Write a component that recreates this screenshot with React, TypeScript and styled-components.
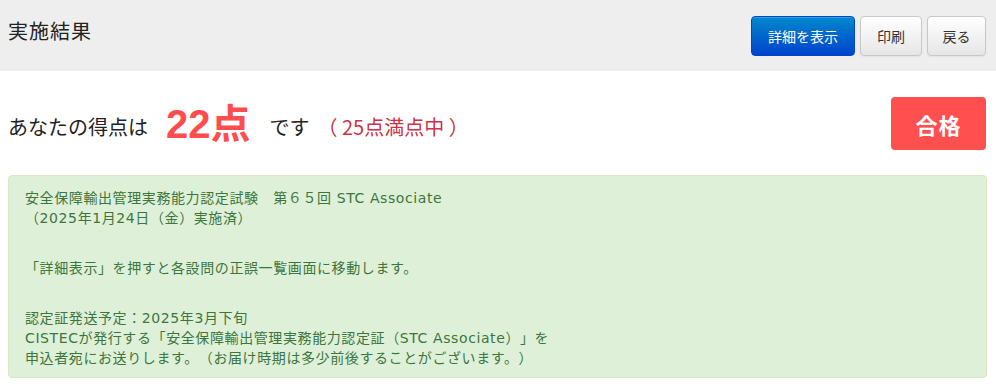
import React from "react";
import styled, { createGlobalStyle } from "styled-components";

const Global = createGlobalStyle`
  html, body { margin: 0; padding: 0; background: #ffffff; }
  body {
    font-family: "Noto Sans CJK JP", "Noto Sans", sans-serif;
    color: #333333;
    text-spacing-trim: space-all;
  }
`;

const Header = styled.header`
  height: 71px;
  background: #eeeeee;
  display: flex;
  justify-content: space-between;
  align-items: flex-start;
  padding: 0 10px 0 8px;
  box-sizing: border-box;
`;

const Title = styled.h1`
  margin: 17px 0 0;
  font-size: 20px;
  font-weight: normal;
  line-height: 28px;
  color: #222222;
  letter-spacing: 1px;
`;

const ButtonGroup = styled.div`
  display: flex;
  gap: 5px;
  margin-top: 16px;
`;

const Button = styled.button<{ $primary?: boolean; $w: number }>`
  width: ${(p) => p.$w}px;
  height: 40px;
  box-sizing: border-box;
  border-radius: 4px;
  font-family: inherit;
  font-size: 14px;
  cursor: pointer;
  padding: 0;
  ${(p) =>
    p.$primary
      ? `
    color: #ffffff;
    border: 1px solid #0044cc;
    background: linear-gradient(to bottom, #0088cc, #0044cc);
    box-shadow: inset 0 1px 0 rgba(255,255,255,0.2);
  `
      : `
    color: #333333;
    border: 1px solid #c8c8c8;
    background: linear-gradient(to bottom, #ffffff, #e6e6e6);
    box-shadow: inset 0 1px 0 rgba(255,255,255,0.2), 0 1px 2px rgba(0,0,0,0.05);
  `}
`;

const ScoreRow = styled.div`
  height: 104px;
  display: flex;
  align-items: center;
  justify-content: space-between;
  padding: 0 10px 0 8px;
`;

const ScoreText = styled.div`
  font-size: 20px;
  line-height: 48px;
  color: #222222;
  white-space: nowrap;
  margin-top: 8px;
`;

const Small = styled.span<{ $red?: boolean }>`
  vertical-align: 3px;
  color: ${(p) => (p.$red ? "#cc3344" : "#222222")};
  margin-left: ${(p) => (p.$red ? "8px" : "0")};
`;

const BigScore = styled.span`
  font-family: "Liberation Sans", "Noto Sans CJK JP", sans-serif;
  font-size: 40px;
  font-weight: bold;
  color: #ff4d4d;
  margin: 0 19px 0 18px;
`;

const PassBadge = styled.div`
  width: 95px;
  height: 53px;
  margin-top: 1px;
  border-radius: 4px;
  background: #ff4f4f;
  color: #ffffff;
  font-size: 22px;
  font-weight: bold;
  display: flex;
  align-items: center;
  justify-content: center;
  letter-spacing: 1px;
`;

const InfoBox = styled.div`
  margin: 0 9px 0 8px;
  padding: 12px 16px 10px;
  background: #dff0d8;
  border: 1px solid #d6e9c6;
  border-radius: 4px;
  color: #3c763d;
  font-family: "DejaVu Sans", "Noto Sans CJK JP", sans-serif;
  font-size: 14px;
  letter-spacing: 0.6px;
  line-height: 20px;
  height: 203px;
  box-sizing: border-box;
  display: flex;
  flex-direction: column;
  gap: 30px;
`;

const Para = styled.div`
  white-space: nowrap;
`;

export default function App() {
  return (
    <>
      <Global />
      <Header>
        <Title>実施結果</Title>
        <ButtonGroup>
          <Button $primary $w={104}>詳細を表示</Button>
          <Button $w={62}>印刷</Button>
          <Button $w={59}>戻る</Button>
        </ButtonGroup>
      </Header>
      <ScoreRow>
        <ScoreText>
          <Small>あなたの得点は</Small>
          <BigScore>22点</BigScore>
          <Small>です</Small>
          <Small $red>（ 25点満点中 ）</Small>
        </ScoreText>
        <PassBadge>合格</PassBadge>
      </ScoreRow>
      <InfoBox>
        <Para>
          安全保障輸出管理実務能力認定試験　第６５回 STC Associate
          <br />
          （2025年1月24日（金）実施済）
        </Para>
        <Para>「詳細表示」を押すと各設問の正誤一覧画面に移動します。</Para>
        <Para>
          認定証発送予定：2025年3月下旬
          <br />
          CISTECが発行する「安全保障輸出管理実務能力認定証（STC Associate）」を
          <br />
          申込者宛にお送りします。（お届け時期は多少前後することがございます。）
        </Para>
      </InfoBox>
    </>
  );
}
